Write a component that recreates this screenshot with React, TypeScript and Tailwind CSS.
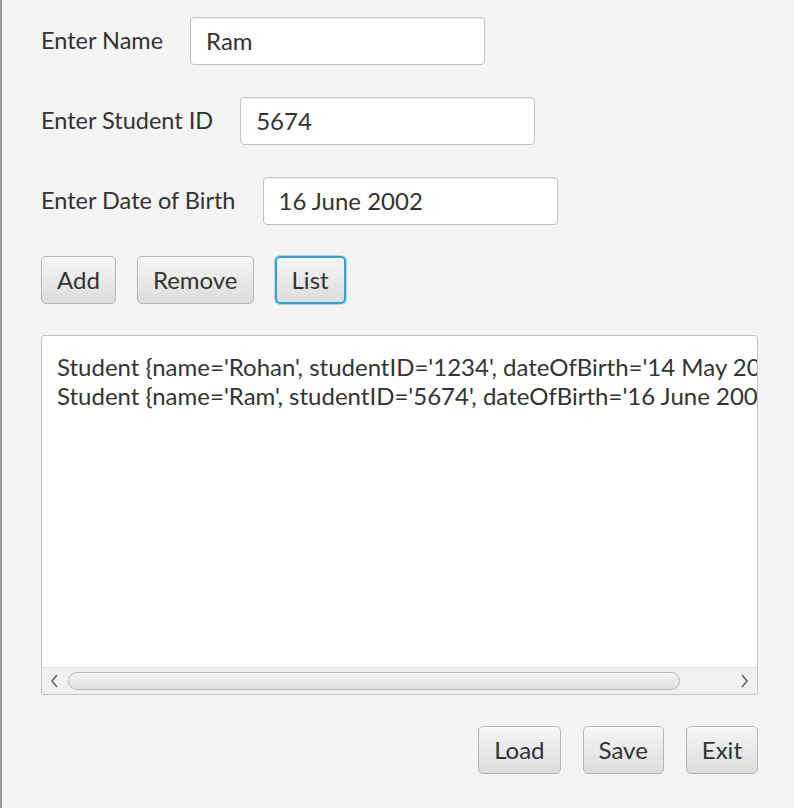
import React from 'react';

const FONT = { fontFamily: 'Lato, "Open Sans", sans-serif' };

const FIELDS = [
  { label: 'Enter Name', value: 'Ram' },
  { label: 'Enter Student ID', value: '5674' },
  { label: 'Enter Date of Birth', value: '16 June 2002' },
];

const LINES = [
  "Student {name='Rohan', studentID='1234', dateOfBirth='14 May 2003'}",
  "Student {name='Ram', studentID='5674', dateOfBirth='16 June 2002'}",
];

function FxButton({ label, focused = false }: { label: string; focused?: boolean }) {
  return (
    <button
      className={
        'h-[48px] px-[15px] rounded-[5px] bg-gradient-to-b from-[#f6f6f6] to-[#dcdcdc] text-[24px] text-[#333333] shadow-[inset_0_1px_0_#ffffff] ' +
        (focused
          ? 'border-2 border-[#3a9fd6] ring-1 ring-[#a9d8f0] px-[13px]'
          : 'border border-[#b4b4b4]')
      }
    >
      {label}
    </button>
  );
}

export default function App() {
  return (
    <div
      style={FONT}
      className="w-[794px] h-[808px] bg-[#f4f4f4] border-l-2 border-[#9a9a9a] pl-[39px] pr-[37px] pt-[17px] flex flex-col text-[#333333] overflow-hidden"
    >
      {/* Form rows */}
      <div className="flex flex-col gap-[32px]">
        {FIELDS.map((f) => (
          <div key={f.label} className="flex items-center gap-[27px] h-[48px]">
            <span className="text-[23.5px] whitespace-nowrap">{f.label}</span>
            <div className="w-[295px] h-[48px] bg-white border border-[#c2c2c2] rounded-[4px] shadow-[inset_0_1px_2px_rgba(0,0,0,0.06)] flex items-center px-[15px] text-[24px]">
              {f.value}
            </div>
          </div>
        ))}
      </div>

      {/* Action buttons */}
      <div className="flex gap-[21px] mt-[31px]">
        <FxButton label="Add" />
        <FxButton label="Remove" />
        <FxButton label="List" focused />
      </div>

      {/* Output area */}
      <div className="mt-[31px] h-[360px] w-[717px] bg-white border border-[#c2c2c2] rounded-[3px] flex flex-col overflow-hidden">
        <div className="flex-1 overflow-hidden px-[15px] pt-[16px] text-[24px] leading-[29px] whitespace-nowrap">
          {LINES.map((l) => (
            <div key={l}>{l}</div>
          ))}
        </div>
        <div className="h-[27px] bg-[#f0f0f0] border-t border-[#dedede] flex items-center px-[6px] gap-[6px]">
          <svg width="14" height="16" viewBox="0 0 14 16" className="shrink-0">
            <path d="M9 2 L4 8 L9 14" fill="none" stroke="#666" strokeWidth="1.6" />
          </svg>
          <div className="w-[612px] h-[18px] rounded-full border border-[#b9b9b9] bg-gradient-to-b from-[#f4f4f4] to-[#e0e0e0]" />
          <div className="flex-1" />
          <svg width="14" height="16" viewBox="0 0 14 16" className="shrink-0">
            <path d="M5 2 L10 8 L5 14" fill="none" stroke="#666" strokeWidth="1.6" />
          </svg>
        </div>
      </div>

      {/* Bottom buttons */}
      <div className="flex justify-end gap-[22px] mt-[31px] w-[717px]">
        <FxButton label="Load" />
        <FxButton label="Save" />
        <FxButton label="Exit" />
      </div>
    </div>
  );
}
